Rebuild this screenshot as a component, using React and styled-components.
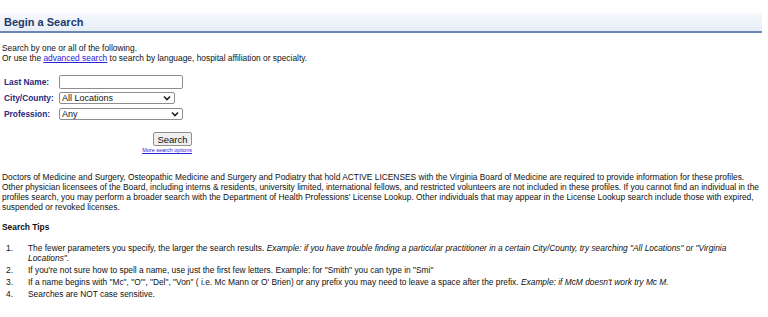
import React from "react";
import styled, { createGlobalStyle } from "styled-components";

const Global = createGlobalStyle`
  html, body {
    margin: 0;
    padding: 0;
    background: #fff;
  }
  body {
    font-family: "Liberation Sans", Arial, sans-serif;
    font-size: 8.4px;
    color: #111;
  }
`;

const tips = [
  <>
    The fewer parameters you specify, the larger the search results.{" "}
    <em>
      Example: if you have trouble finding a particular practitioner in a
      certain City/County, try searching "All Locations" or "Virginia
      Locations".
    </em>
  </>,
  <>
    If you're not sure how to spell a name, use just the first few letters.
    Example: for "Smith" you can type in "Smi"
  </>,
  <>
    If a name begins with "Mc", "O'", "Del", "Von" ( i.e. Mc Mann or O'
    Brien) or any prefix you may need to leave a space after the prefix.{" "}
    <em>Example: if McM doesn't work try Mc M.</em>
  </>,
  <>Searches are NOT case sensitive.</>,
];

export default function App() {
  return (
    <>
      <Global />
      <Page>
        <Header>
          <h1>Begin a Search</h1>
        </Header>

        <Intro>
          Search by one or all of the following.
          <br />
          Or use the <a href="#">advanced search</a> to search by language,
          hospital affiliation or specialty.
        </Intro>

        <Form>
          <Row>
            <Label>Last Name:</Label>
            <TextInput type="text" />
          </Row>
          <Row>
            <Label>City/County:</Label>
            <SelectBox width={116}>
              <select defaultValue="all">
                <option value="all">All Locations</option>
              </select>
              <Chevron />
            </SelectBox>
          </Row>
          <Row>
            <Label>Profession:</Label>
            <SelectBox width={124}>
              <select defaultValue="any">
                <option value="any">Any</option>
              </select>
              <Chevron />
            </SelectBox>
          </Row>
          <Submit>
            <button type="button">Search</button>
            <a href="#">More search options</a>
          </Submit>
        </Form>

        <Notice>
          Doctors of Medicine and Surgery, Osteopathic Medicine and Surgery and
          Podiatry that hold ACTIVE LICENSES with the Virginia Board of
          Medicine are required to provide information for these profiles.
          <br />
          Other physician licensees of the Board, including interns &amp;
          residents, university limited, international fellows, and restricted
          volunteers are not included in these profiles. If you cannot find an
          individual in the profiles search, you may perform a broader search
          with the Department of Health Professions' License Lookup. Other
          individuals that may appear in the License Lookup search include
          those with expired, suspended or revoked licenses.
        </Notice>

        <TipsTitle>Search Tips</TipsTitle>
        <Tips>
          {tips.map((t, i) => (
            <Tip key={i}>
              <span>{i + 1}.</span>
              <div>{t}</div>
            </Tip>
          ))}
        </Tips>
      </Page>
    </>
  );
}

function Chevron() {
  return (
    <svg width="8" height="6" viewBox="0 0 8 6">
      <path
        d="M1 1.5 L4 4.5 L7 1.5"
        fill="none"
        stroke="#222"
        strokeWidth="1.6"
      />
    </svg>
  );
}

const Page = styled.div`
  padding: 13px 2px 10px 0;
`;

const Header = styled.div`
  width: 762px;
  height: 18px;
  background: linear-gradient(#f6f9fd, #e7eef7);
  border-bottom: 2px solid #6d87b4;
  display: flex;
  align-items: center;
  h1 {
    margin: 0 0 0 4px;
    font-size: 11px;
    font-weight: bold;
    color: #1d3b6a;
  }
`;

const Intro = styled.p`
  margin: 10px 0 0 2px;
  line-height: 10px;
  a {
    color: #2b22d6;
  }
`;

const Form = styled.div`
  margin-top: 12px;
  padding-left: 4px;
  display: flex;
  flex-direction: column;
  gap: 3px;
`;

const Row = styled.div`
  display: flex;
  align-items: center;
  height: 13px;
`;

const Label = styled.label`
  width: 55px;
  font-weight: bold;
  color: #28287c;
  white-space: nowrap;
`;

const TextInput = styled.input`
  box-sizing: border-box;
  width: 124px;
  height: 14px;
  border: 1px solid #8d8d8d;
  border-radius: 2px;
  padding: 0 3px;
  font: inherit;
`;

const SelectBox = styled.div`
  position: relative;
  width: ${(p) => p.width}px;
  height: 12px;
  select {
    appearance: none;
    box-sizing: border-box;
    width: 100%;
    height: 100%;
    border: 1px solid #8d8d8d;
    border-radius: 2px;
    background: #fff;
    padding: 0 0 0 2px;
    font-family: "Liberation Sans", Arial, sans-serif;
    font-size: 9px;
    color: #111;
    line-height: 10px;
  }
  svg {
    position: absolute;
    right: 4px;
    top: 3px;
    pointer-events: none;
  }
`;

const Submit = styled.div`
  width: 188px;
  margin-top: 9px;
  display: flex;
  flex-direction: column;
  align-items: flex-end;
  button {
    box-sizing: border-box;
    width: 39px;
    height: 14px;
    padding: 0;
    font-family: "Liberation Sans", Arial, sans-serif;
    font-size: 9.5px;
    color: #111;
    background: #efefef;
    border: 1px solid #8f8f8f;
    border-radius: 2px;
  }
  a {
    margin-top: 1px;
    font-size: 5.5px;
    color: #2b22d6;
  }
`;

const Notice = styled.p`
  margin: 19px 0 0 2px;
  line-height: 10px;
`;

const TipsTitle = styled.h3`
  margin: 10px 0 0 2px;
  font-size: 8.4px;
  font-weight: bold;
  line-height: 10px;
`;

const Tips = styled.div`
  margin-top: 11px;
  display: flex;
  flex-direction: column;
  gap: 2px;
  line-height: 10px;
`;

const Tip = styled.div`
  display: flex;
  span {
    flex: 0 0 22px;
    padding-left: 6px;
  }
  div {
    flex: 1;
  }
`;
